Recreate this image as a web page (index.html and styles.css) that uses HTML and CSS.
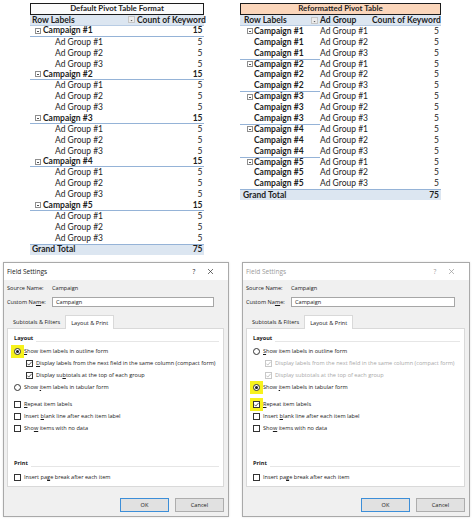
FILE: index.html
```html
<!DOCTYPE html>
<html>
<head>
<meta charset="utf-8">
<link rel="stylesheet" href="styles.css">
</head>
<body>
<div class="top">
  <div class="pt pt-left">
    <div class="pt-title">Default Pivot Table Format</div>
    <div class="lrow hdr"><span class="lbl hl-lbl">Row Labels</span><span class="dd"><svg viewBox="0 0 7 7" width="7" height="7"><path d="M2 2.8h3L3.5 4.6z" fill="#555"/></svg></span><span class="hval">Count of Keyword</span></div>

    <div class="lrow camp"><span class="lbl"><i class="exp"></i>Campaign #1</span><span class="val">15</span></div>
    <div class="lrow item"><span class="lbl">Ad Group #1</span><span class="val">5</span></div>
    <div class="lrow item"><span class="lbl">Ad Group #2</span><span class="val">5</span></div>
    <div class="lrow item"><span class="lbl">Ad Group #3</span><span class="val">5</span></div>

    <div class="lrow camp"><span class="lbl"><i class="exp"></i>Campaign #2</span><span class="val">15</span></div>
    <div class="lrow item"><span class="lbl">Ad Group #1</span><span class="val">5</span></div>
    <div class="lrow item"><span class="lbl">Ad Group #2</span><span class="val">5</span></div>
    <div class="lrow item"><span class="lbl">Ad Group #3</span><span class="val">5</span></div>

    <div class="lrow camp"><span class="lbl"><i class="exp"></i>Campaign #3</span><span class="val">15</span></div>
    <div class="lrow item"><span class="lbl">Ad Group #1</span><span class="val">5</span></div>
    <div class="lrow item"><span class="lbl">Ad Group #2</span><span class="val">5</span></div>
    <div class="lrow item"><span class="lbl">Ad Group #3</span><span class="val">5</span></div>

    <div class="lrow camp"><span class="lbl"><i class="exp"></i>Campaign #4</span><span class="val">15</span></div>
    <div class="lrow item"><span class="lbl">Ad Group #1</span><span class="val">5</span></div>
    <div class="lrow item"><span class="lbl">Ad Group #2</span><span class="val">5</span></div>
    <div class="lrow item"><span class="lbl">Ad Group #3</span><span class="val">5</span></div>

    <div class="lrow camp"><span class="lbl"><i class="exp"></i>Campaign #5</span><span class="val">15</span></div>
    <div class="lrow item"><span class="lbl">Ad Group #1</span><span class="val">5</span></div>
    <div class="lrow item"><span class="lbl">Ad Group #2</span><span class="val">5</span></div>
    <div class="lrow item"><span class="lbl">Ad Group #3</span><span class="val">5</span></div>

    <div class="lrow total"><span class="lbl">Grand Total</span><span class="val">75</span></div>
  </div>

  <div class="pt pt-right">
    <div class="pt-title peach">Reformatted Pivot Table</div>
    <div class="rrow hdr"><span class="c1 c1h">Row Labels<span class="dd"><svg viewBox="0 0 7 7" width="7" height="7"><path d="M2 2.8h3L3.5 4.6z" fill="#555"/></svg></span></span><span class="c2">Ad Group</span><span class="c3">Count of Keyword</span></div>

    <div class="rrow"><span class="c1 first"><i class="exp"></i>Campaign #1</span><span class="c2">Ad Group #1</span><span class="c3">5</span></div>
    <div class="rrow"><span class="c1 rep">Campaign #1</span><span class="c2">Ad Group #2</span><span class="c3">5</span></div>
    <div class="rrow"><span class="c1 rep sep">Campaign #1</span><span class="c2">Ad Group #3</span><span class="c3">5</span></div>

    <div class="rrow"><span class="c1 first"><i class="exp"></i>Campaign #2</span><span class="c2">Ad Group #1</span><span class="c3">5</span></div>
    <div class="rrow"><span class="c1 rep">Campaign #2</span><span class="c2">Ad Group #2</span><span class="c3">5</span></div>
    <div class="rrow"><span class="c1 rep sep">Campaign #2</span><span class="c2">Ad Group #3</span><span class="c3">5</span></div>

    <div class="rrow"><span class="c1 first"><i class="exp"></i>Campaign #3</span><span class="c2">Ad Group #1</span><span class="c3">5</span></div>
    <div class="rrow"><span class="c1 rep">Campaign #3</span><span class="c2">Ad Group #2</span><span class="c3">5</span></div>
    <div class="rrow"><span class="c1 rep sep">Campaign #3</span><span class="c2">Ad Group #3</span><span class="c3">5</span></div>

    <div class="rrow"><span class="c1 first"><i class="exp"></i>Campaign #4</span><span class="c2">Ad Group #1</span><span class="c3">5</span></div>
    <div class="rrow"><span class="c1 rep">Campaign #4</span><span class="c2">Ad Group #2</span><span class="c3">5</span></div>
    <div class="rrow"><span class="c1 rep sep">Campaign #4</span><span class="c2">Ad Group #3</span><span class="c3">5</span></div>

    <div class="rrow"><span class="c1 first"><i class="exp"></i>Campaign #5</span><span class="c2">Ad Group #1</span><span class="c3">5</span></div>
    <div class="rrow"><span class="c1 rep">Campaign #5</span><span class="c2">Ad Group #2</span><span class="c3">5</span></div>
    <div class="rrow"><span class="c1 rep">Campaign #5</span><span class="c2">Ad Group #3</span><span class="c3">5</span></div>

    <div class="rrow total"><span class="c1">Grand Total</span><span class="c2"></span><span class="c3">75</span></div>
  </div>
</div>

<div class="dialogs">
  <!-- Left dialog: outline form -->
  <div class="dlg dlg-left">
    <div class="dlg-title"><span class="t">Field Settings</span><span class="q">?</span><span class="x"><svg viewBox="0 0 7 7" width="7" height="7"><path d="M1 1L6 6M6 1L1 6" stroke="#333" stroke-width="0.7"/></svg></span></div>
    <div class="dlg-body">
      <div class="field"><span class="flbl">Source Name:</span><span class="fval">Campaign</span></div>
      <div class="field"><span class="flbl">Custom Na<u>m</u>e:</span><span class="input">Campaign</span></div>
      <div class="tabs"><span class="tab">Subtotals &amp; Filters</span><span class="tab active">Layout &amp; Print</span></div>
      <div class="panel">
        <div class="sec">Layout</div>
        <div class="grp grp-a">
          <div class="opt"><span class="mark hl"><span class="radio on"></span></span><span><u>S</u>how item labels in outline form</span></div>
          <div class="opt sub"><span class="mark"><span class="cb"><svg viewBox="0 0 7 7" width="7" height="7"><path d="M1.3 3.6L2.8 5.1L5.7 1.8" fill="none" stroke="#333" stroke-width="0.8"/></svg></span></span><span><u>D</u>isplay labels from the next field in the same column (compact form)</span></div>
          <div class="opt sub"><span class="mark"><span class="cb"><svg viewBox="0 0 7 7" width="7" height="7"><path d="M1.3 3.6L2.8 5.1L5.7 1.8" fill="none" stroke="#333" stroke-width="0.8"/></svg></span></span><span>Display su<u>b</u>totals at the top of each group</span></div>
          <div class="opt"><span class="mark"><span class="radio"></span></span><span>Show <u>i</u>tem labels in tabular form</span></div>
        </div>
        <div class="grp grp-b">
          <div class="opt"><span class="mark"><span class="cb"></span></span><span><u>R</u>epeat item labels</span></div>
          <div class="opt"><span class="mark"><span class="cb"></span></span><span>Insert <u>b</u>lank line after each item label</span></div>
          <div class="opt"><span class="mark"><span class="cb"></span></span><span>Sho<u>w</u> items with no data</span></div>
        </div>
        <div class="sec sec-print">Print</div>
        <div class="grp grp-c">
          <div class="opt"><span class="mark"><span class="cb"></span></span><span>Insert pa<u>g</u>e break after each item</span></div>
        </div>
      </div>
      <div class="btns"><span class="btn ok">OK</span><span class="btn">Cancel</span></div>
    </div>
  </div>

  <!-- Right dialog: tabular form -->
  <div class="dlg dlg-right">
    <div class="dlg-title inactive"><span class="t">Field Settings</span><span class="q">?</span><span class="x"><svg viewBox="0 0 7 7" width="7" height="7"><path d="M1 1L6 6M6 1L1 6" stroke="#999" stroke-width="0.7"/></svg></span></div>
    <div class="dlg-body">
      <div class="field"><span class="flbl">Source Name:</span><span class="fval">Campaign</span></div>
      <div class="field"><span class="flbl">Custom Na<u>m</u>e:</span><span class="input">Campaign</span></div>
      <div class="tabs"><span class="tab">Subtotals &amp; Filters</span><span class="tab active">Layout &amp; Print</span></div>
      <div class="panel">
        <div class="sec">Layout</div>
        <div class="grp grp-a">
          <div class="opt"><span class="mark"><span class="radio"></span></span><span><u>S</u>how item labels in outline form</span></div>
          <div class="opt sub disabled"><span class="mark"><span class="cb"><svg viewBox="0 0 7 7" width="7" height="7"><path d="M1.3 3.6L2.8 5.1L5.7 1.8" fill="none" stroke="#b5b5b5" stroke-width="0.8"/></svg></span></span><span>Display labels from the next field in the same column (compact form)</span></div>
          <div class="opt sub disabled"><span class="mark"><span class="cb"><svg viewBox="0 0 7 7" width="7" height="7"><path d="M1.3 3.6L2.8 5.1L5.7 1.8" fill="none" stroke="#b5b5b5" stroke-width="0.8"/></svg></span></span><span>Display subtotals at the top of each group</span></div>
          <div class="opt"><span class="mark hl"><span class="radio on"></span></span><span>Show <u>i</u>tem labels in tabular form</span></div>
        </div>
        <div class="grp grp-b">
          <div class="opt"><span class="mark hl"><span class="cb"><svg viewBox="0 0 7 7" width="7" height="7"><path d="M1.3 3.6L2.8 5.1L5.7 1.8" fill="none" stroke="#333" stroke-width="0.8"/></svg></span></span><span><u>R</u>epeat item labels</span></div>
          <div class="opt"><span class="mark"><span class="cb"></span></span><span>Insert <u>b</u>lank line after each item label</span></div>
          <div class="opt"><span class="mark"><span class="cb"></span></span><span>Sho<u>w</u> items with no data</span></div>
        </div>
        <div class="sec sec-print">Print</div>
        <div class="grp grp-c">
          <div class="opt"><span class="mark"><span class="cb"></span></span><span>Insert pa<u>g</u>e break after each item</span></div>
        </div>
      </div>
      <div class="btns"><span class="btn ok">OK</span><span class="btn">Cancel</span></div>
    </div>
  </div>
</div>
</body>
</html>
```

FILE: styles.css
```css
* { box-sizing: border-box; margin: 0; padding: 0; }

body {
  width: 474px;
  height: 521px;
  overflow: hidden;
  background: #ffffff;
  color: #1e1e1e;
  font-family: Lato, "Liberation Sans", sans-serif;
}

/* ---------- pivot tables ---------- */
.top {
  height: 262px;
  display: flex;
  align-items: flex-start;
  gap: 36px;
  padding: 3px 0 0 30px;
}

.pt {
  display: flex;
  flex-direction: column;
  font-size: 8.5px;
}
.pt-left { width: 174px; }
.pt-right { width: 201px; }

.pt-title {
  height: 12px;
  border: 1.5px solid #1b1b1b;
  text-align: center;
  font-weight: 700;
  font-size: 7.9px;
  line-height: 9px;
  background: #fbfbfb;
}
.pt-title.peach { background: #fbd6bb; }

.lrow, .rrow {
  height: 10.9px;
  line-height: 10.9px;
  white-space: nowrap;
}

.lrow { display: flex; align-items: center; }
.lrow .lbl { flex: 1; }
.lrow .val { padding-right: 1.5px; text-align: right; }
.lrow .hval { width: 67px; }

.hdr {
  background: #dce6f1;
  font-weight: 700;
  border-bottom: 1px solid #b8cce4;
}
.hl-lbl { padding-left: 2px; }

.dd {
  display: inline-flex;
  width: 7px;
  height: 7px;
  margin-right: 2px;
  background: #ececec;
  border: 0.5px solid #c6c6c6;
}
.dd svg { display: block; }

.camp { font-weight: 700; border-bottom: 1px solid #95b3d7; }
.camp .lbl { padding-left: 5px; display: flex; align-items: center; }
.item .lbl { padding-left: 25px; }

.exp {
  display: inline-block;
  position: relative;
  width: 6px;
  height: 6px;
  border: 0.8px solid #8e8e8e;
  margin-right: 2px;
  flex: none;
}
.exp::after {
  content: "";
  position: absolute;
  left: 1px;
  right: 1px;
  top: 2px;
  height: 0.8px;
  background: #555;
}

.total {
  background: #dce6f1;
  font-weight: 700;
  border-top: 1px solid #95b3d7;
}
.total .lbl { padding-left: 2px; }

.rrow {
  display: grid;
  grid-template-columns: 80px 52px 69px;
  align-items: stretch;
}
.rrow .c1 { font-weight: 700; display: flex; align-items: center; }
.rrow .c3 { text-align: right; padding-right: 2px; }
.rrow.hdr .c3 { padding-right: 3px; }
.rrow .c1h { padding-left: 4px; justify-content: space-between; }
.rrow .first { padding-left: 7px; }
.rrow .first .exp { margin-right: 1px; }
.rrow .rep { padding-left: 14px; }
.rrow .sep { border-bottom: 1px solid #95b3d7; }
.rrow.total .c1 { padding-left: 3px; }

/* ---------- dialogs ---------- */
.dialogs {
  display: flex;
  gap: 13px;
  padding-left: 3px;
}

.dlg {
  height: 255px;
  border: 1px solid #a9a9a9;
  background: #f0f0f0;
  font-family: "Open Sans", "Noto Sans", sans-serif;
  font-size: 5.6px;
  color: #1a1a1a;
  box-shadow: 0 0 2px rgba(0, 0, 0, 0.12);
}
.dlg-left { width: 226px; }
.dlg-right { width: 228px; }

.dlg-title {
  height: 17px;
  background: #ffffff;
  display: flex;
  align-items: center;
  padding-left: 3px;
  font-size: 6.5px;
}
.dlg-title .t { flex: 1; }
.dlg-title .q { width: 26px; text-align: center; font-size: 6.5px; }
.dlg-title .x { width: 16px; display: flex; justify-content: flex-start; margin-right: 5px; }
.dlg-title .x svg { display: block; }
.dlg-title.inactive { color: #9a9a9a; }

.dlg-body { padding: 0 4px 0 3px; }

.field {
  display: flex;
  align-items: center;
  height: 10px;
  margin-top: 3px;
}
.field + .field { height: 11px; }
.flbl { width: 45px; }
.input {
  flex: 1;
  margin-right: 10px;
  height: 10px;
  line-height: 9px;
  background: #ffffff;
  border: 1px solid #a6a6a6;
  padding-left: 3px;
  margin-top: 1px;
}

.tabs {
  display: flex;
  height: 13px;
  margin-top: 8px;
  padding-left: 2px;
  position: relative;
  z-index: 1;
}
.tab {
  display: flex;
  align-items: center;
  padding: 0 4px;
  height: 13px;
}
.tab.active {
  background: #ffffff;
  border: 1px solid #d9d9d9;
  border-bottom: none;
  margin-left: 1px;
  width: 49px;
  justify-content: center;
  height: 14px;
}

.panel {
  height: 159px;
  background: #ffffff;
  border: 1px solid #d9d9d9;
  padding: 4px 4px 0 6px;
}

.sec {
  display: flex;
  align-items: center;
  height: 10px;
  font-weight: 700;
}
.sec::after {
  content: "";
  flex: 1;
  height: 1px;
  background: #e6e6e6;
  margin-left: 3px;
  margin-top: 6px;
}
.sec-print { margin-top: 25px; }

.grp { display: flex; flex-direction: column; gap: 2px; }
.grp-a { margin-top: 3px; }
.grp-b { margin-top: 7px; }
.grp-c { margin-top: 4px; }

.opt {
  display: flex;
  align-items: center;
  height: 10px;
  white-space: nowrap;
}
.opt.sub { padding-left: 12px; }
.opt.disabled { color: #a8a8a8; }
.opt.disabled .cb { border-color: #c8c8c8; }

.mark {
  width: 7px;
  height: 7px;
  margin-right: 3px;
  display: flex;
  align-items: center;
  justify-content: center;
  flex: none;
}
.mark.hl {
  background: #f7f21c;
  box-shadow: 0 0 0 3px #f7f21c;
}

.radio {
  width: 7px;
  height: 7px;
  border-radius: 50%;
  border: 0.8px solid #333;
  background: #ffffff;
  display: flex;
  align-items: center;
  justify-content: center;
}
.radio.on::after {
  content: "";
  width: 3px;
  height: 3px;
  border-radius: 50%;
  background: #1a1a1a;
}

.cb {
  width: 7px;
  height: 7px;
  border: 0.8px solid #333;
  background: #ffffff;
  display: flex;
  align-items: center;
  justify-content: center;
  overflow: hidden;
}
.cb svg { display: block; flex: none; }

.btns {
  display: flex;
  justify-content: flex-end;
  gap: 6px;
  margin-top: 11px;
}
.btn {
  width: 49px;
  height: 14px;
  display: flex;
  align-items: center;
  justify-content: center;
  background: #e1e1e1;
  border: 1px solid #adadad;
}
.btn.ok { border-color: #3c8ed8; }
```
